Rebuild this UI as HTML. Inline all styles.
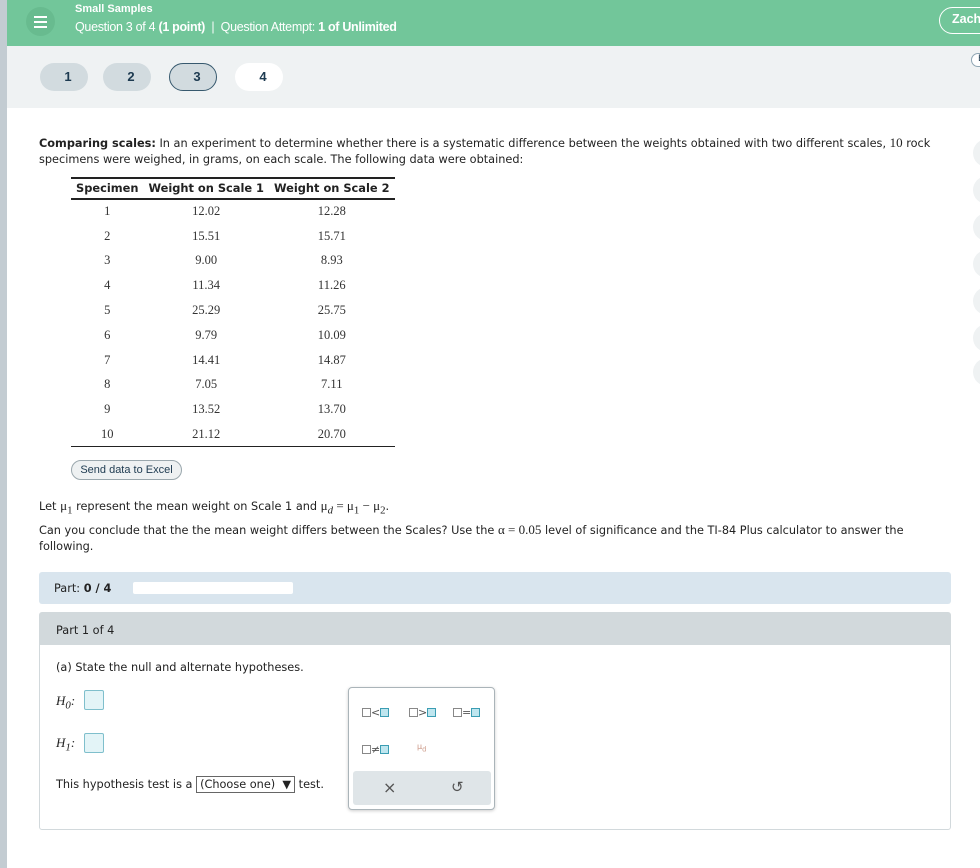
<!DOCTYPE html>
<html><head><meta charset="utf-8"><style>
*{margin:0;padding:0;box-sizing:border-box}
body{width:980px;height:868px;overflow:hidden;background:#fff;font-family:"DejaVu Sans","Liberation Sans",sans-serif;font-size:11.3px;color:#222;position:relative}
.strip{position:absolute;left:0;top:0;width:7px;height:868px;background:#c3ccd2}
.hdr{position:absolute;left:7px;top:0;width:973px;height:46px;background:#72c69a;color:#fff;font-family:"Liberation Sans",sans-serif}
.ham{position:absolute;left:19px;top:7px;width:29px;height:29px;border-radius:50%;background:#68bb8f}
.ham i{position:absolute;left:8px;width:13px;height:2px;background:#fff}
.t1{position:absolute;left:68px;top:3px;font-weight:bold;font-size:11px}
.t2{position:absolute;left:68px;top:20px;font-size:12.5px;letter-spacing:-0.3px}
.zach{position:absolute;left:932px;top:7px;width:60px;height:27px;border:1px solid #fff;border-radius:14px;font-weight:bold;font-size:12.5px;padding:4px 0 0 12px}
.nav{position:absolute;left:7px;top:46px;width:973px;height:62px;background:#eff2f3}
.pill{position:absolute;top:17px;width:48px;height:28px;border-radius:14px;background:#d2dbdf;font-family:"Liberation Sans",sans-serif;font-weight:bold;font-size:13px;color:#1d3a50;text-align:center;padding-top:6px;padding-left:8px}
.sm{position:absolute;left:964px;top:7px;width:24px;height:14px;border:1px solid #8fa6b3;border-radius:7px;background:#fff;font-size:9px;padding-left:6px;color:#1d3a50}
.circ{position:absolute;left:973px;width:30px;height:28px;border-radius:14px;background:#eff2f3}
.txt{position:absolute;left:39px;line-height:16px}
table{position:absolute;left:71px;top:177px;border-collapse:collapse;border-top:2px solid #222;border-bottom:1px solid #222}
th{font-weight:bold;font-size:11.4px;padding:2px 5px 3px;border-bottom:2px solid #222;white-space:nowrap;height:21px}
td{font-family:"Liberation Serif",serif;font-size:12.5px;text-align:center;height:24.8px;color:#333}
.excel{position:absolute;left:71px;top:460px;width:111px;height:20px;border:1px solid #9aa7ad;border-radius:10px;background:#eef1f2;font-family:"Liberation Sans",sans-serif;font-size:11px;color:#1d3a50;text-align:center;padding-top:3px}
.pbar{position:absolute;left:39px;top:572px;width:912px;height:32px;background:#d9e5ee;border-radius:3px}
.pbar span{position:absolute;left:15px;top:10px}
.pbar i{position:absolute;left:94px;top:10px;width:160px;height:12px;background:#fff;border-radius:2px}
.part{position:absolute;left:39px;top:612px;width:912px;height:218px;border:1px solid #d2d9dc;border-radius:3px}
.phd{height:32px;background:#d2d9dc;padding:11px 0 0 16px}
.ser{font-family:"Liberation Serif",serif;font-style:italic;font-size:13px}
.box{position:absolute;width:20px;height:20px;border:1.5px solid #7fbfcc;background:#e3f4f7;border-radius:2px}
.sel{display:inline-block;border:1px solid #666;padding:0 3px;height:17px;line-height:15px}
.pop{position:absolute;left:348px;top:687px;width:147px;height:123px;border:1px solid #aab4b9;border-radius:4px;background:#fff;box-shadow:0 1px 3px rgba(0,0,0,.2)}
.op{position:absolute;font-size:11px;color:#555;white-space:nowrap}
.op b{display:inline-block;width:9px;height:9px;border:1px solid #888;vertical-align:-1px}
.op b.c{border-color:#3b9db3;background:#bfe6ef}
.bot{position:absolute;left:4px;top:83px;width:138px;height:34px;background:#dfe5e8;border-radius:3px}
</style></head><body>
<div class="strip"></div>
<div class="hdr">
<div class="ham"><i style="top:9px"></i><i style="top:14px"></i><i style="top:19px"></i></div>
<div class="t1">Small Samples</div>
<div class="t2">Question 3 of 4 <b>(1 point)</b> &nbsp;|&nbsp; Question Attempt: <b>1 of Unlimited</b></div>
<div class="zach">Zach</div>
</div>
<div class="nav">
<div class="pill" style="left:33px">1</div>
<div class="pill" style="left:96px">2</div>
<div class="pill" style="left:162px;border:1.5px solid #37596e;padding-top:5px">3</div>
<div class="pill" style="left:228px;background:#fff">4</div>
<div class="sm">E</div>
</div>
<div class="circ" style="top:139px"></div><div class="circ" style="top:176px"></div><div class="circ" style="top:213px"></div><div class="circ" style="top:250px"></div><div class="circ" style="top:287px"></div><div class="circ" style="top:324px"></div><div class="circ" style="top:358px"></div>
<div class="txt" style="top:135px;width:900px"><b>Comparing scales:</b> In an experiment to determine whether there is a systematic difference between the weights obtained with two different scales, <span style="font-family:'Liberation Serif';font-size:13px">10</span> rock specimens were weighed, in grams, on each scale. The following data were obtained:</div>
<table>
<tr><th>Specimen</th><th>Weight on Scale 1</th><th>Weight on Scale 2</th></tr>
<tr><td>1</td><td>12.02</td><td>12.28</td></tr>
<tr><td>2</td><td>15.51</td><td>15.71</td></tr>
<tr><td>3</td><td>9.00</td><td>8.93</td></tr>
<tr><td>4</td><td>11.34</td><td>11.26</td></tr>
<tr><td>5</td><td>25.29</td><td>25.75</td></tr>
<tr><td>6</td><td>9.79</td><td>10.09</td></tr>
<tr><td>7</td><td>14.41</td><td>14.87</td></tr>
<tr><td>8</td><td>7.05</td><td>7.11</td></tr>
<tr><td>9</td><td>13.52</td><td>13.70</td></tr>
<tr><td>10</td><td>21.12</td><td>20.70</td></tr>
</table>
<div class="excel">Send data to Excel</div>
<div class="txt" style="top:498px">Let <span class="ser" style="font-style:normal">μ<sub>1</sub></span> represent the mean weight on Scale 1 and <span class="ser" style="font-style:normal">μ<sub><i>d</i></sub> = μ<sub>1</sub> − μ<sub>2</sub></span>.</div>
<div class="txt" style="top:522px;width:872px">Can you conclude that the the mean weight differs between the Scales? Use the <span class="ser" style="font-style:normal">α = 0.05</span> level of significance and the TI-84 Plus calculator to answer the following.</div>
<div class="pbar"><span>Part: <b>0 / 4</b></span><i></i></div>
<div class="part"><div class="phd">Part 1 of 4</div>
<div style="position:absolute;left:16px;top:48px">(a) State the null and alternate hypotheses.</div>
<div class="ser" style="position:absolute;left:16px;top:80px">H<sub>0</sub>:</div><div class="box" style="left:44px;top:77px"></div>
<div class="ser" style="position:absolute;left:16px;top:122px">H<sub>1</sub>:</div><div class="box" style="left:44px;top:120px"></div>
<div style="position:absolute;left:16px;top:163px">This hypothesis test is a <span class="sel">(Choose one) &nbsp;▼</span> test.</div>
</div>
<div class="pop">
<div class="op" style="left:13px;top:18px"><b></b>&lt;<b class="c"></b></div>
<div class="op" style="left:60px;top:18px"><b></b>&gt;<b class="c"></b></div>
<div class="op" style="left:104px;top:18px"><b></b>=<b class="c"></b></div>
<div class="op" style="left:13px;top:55px"><b></b>≠<b class="c"></b></div>
<div class="op" style="left:68px;top:54px;font-size:8px;color:#c98">μ<sub>d</sub></div>
<div class="bot"><span style="position:absolute;left:30px;top:7px;font-size:16px;color:#555">×</span><span style="position:absolute;left:98px;top:7px;font-size:15px;color:#555">↺</span></div>
</div>
</body></html>
